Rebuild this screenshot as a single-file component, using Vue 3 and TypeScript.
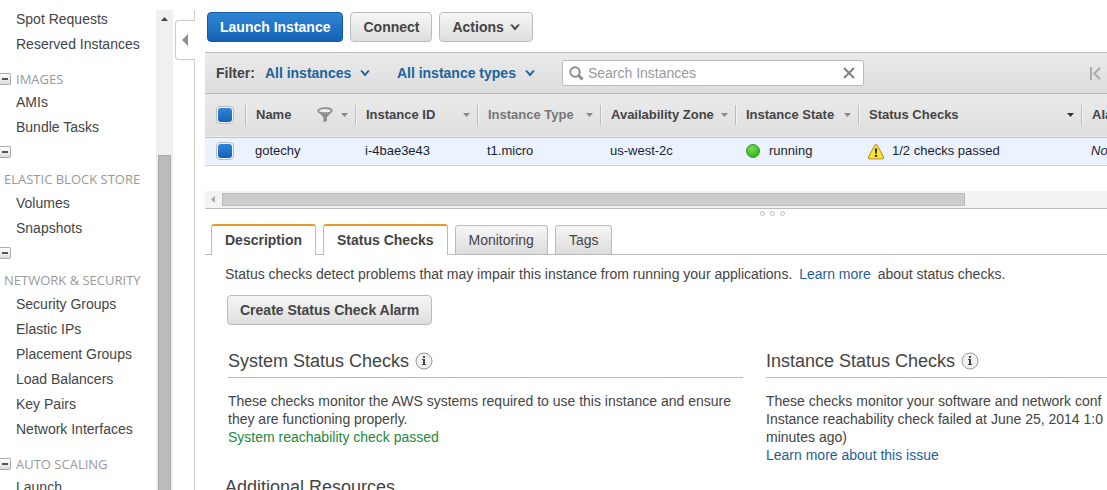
<script setup lang="ts">
import { ref } from 'vue'

interface NavGroup {
  title?: string
  wrapped?: boolean
  items: string[]
}

interface Column {
  key: string
  label: string
  filter?: boolean
  soft?: boolean
  sorted?: boolean
}

const groups: NavGroup[] = [
  { items: ['Spot Requests', 'Reserved Instances'] },
  { title: 'IMAGES', items: ['AMIs', 'Bundle Tasks'] },
  { title: 'ELASTIC BLOCK STORE', wrapped: true, items: ['Volumes', 'Snapshots'] },
  {
    title: 'NETWORK & SECURITY',
    wrapped: true,
    items: ['Security Groups', 'Elastic IPs', 'Placement Groups', 'Load Balancers', 'Key Pairs', 'Network Interfaces'],
  },
  { title: 'AUTO SCALING', items: ['Launch'] },
]

const columns: Column[] = [
  { key: 'name', label: 'Name', filter: true },
  { key: 'id', label: 'Instance ID' },
  { key: 'type', label: 'Instance Type', soft: true },
  { key: 'zone', label: 'Availability Zone' },
  { key: 'state', label: 'Instance State' },
  { key: 'checks', label: 'Status Checks', sorted: true },
  { key: 'alarm', label: 'Alarm Status' },
]

const tabs = ['Description', 'Status Checks', 'Monitoring', 'Tags']
const raised = ['Description', 'Status Checks']
const activeTab = ref('Status Checks')
const search = ref('')
const allSelected = ref(true)
const rowSelected = ref(true)
</script>

<template>
  <div class="console">
    <aside class="sidebar">
      <nav class="nav">
        <section v-for="(group, i) in groups" :key="i" class="group">
          <div v-if="group.title" class="group-head" :class="{ wrapped: group.wrapped }">
            <button class="toggle" type="button" :aria-label="'Collapse ' + group.title"></button>
            <h2>{{ group.title }}</h2>
          </div>
          <a v-for="item in group.items" :key="item" href="#">{{ item }}</a>
        </section>
      </nav>
      <div class="vscroll">
        <svg width="7" height="4" viewBox="0 0 7 4"><path d="M3.5 0 7 4H0z" fill="#444" /></svg>
        <div class="vthumb"></div>
      </div>
      <div class="edge">
        <button class="collapse" type="button" aria-label="Hide navigation">
          <svg width="6" height="12" viewBox="0 0 6 12"><path d="M6 0v12L0 6z" fill="#8e8e8e" /></svg>
        </button>
      </div>
    </aside>

    <main class="main">
      <div class="toolbar">
        <button class="btn primary" type="button">Launch Instance</button>
        <button class="btn" type="button">Connect</button>
        <button class="btn" type="button">
          Actions
          <svg width="10" height="7" viewBox="0 0 10 7"><path d="M0 .5h2.400L5 3.600 7.600.5H10L5 6.500z" fill="#444" /></svg>
        </button>
      </div>

      <div class="filters">
        <span class="filter-label">Filter:</span>
        <label class="pick">
          <select aria-label="Instance filter"><option>All instances</option></select>
          <svg width="10" height="7" viewBox="0 0 10 7"><path d="M0 .5h2.400L5 3.600 7.600.5H10L5 6.500z" fill="#1a63a0" /></svg>
        </label>
        <label class="pick">
          <select aria-label="Instance type filter"><option>All instance types</option></select>
          <svg width="10" height="7" viewBox="0 0 10 7"><path d="M0 .5h2.400L5 3.600 7.600.5H10L5 6.500z" fill="#1a63a0" /></svg>
        </label>
        <div class="search">
          <svg width="15" height="15" viewBox="0 0 15 15" fill="none" stroke="#8e8e8e">
            <circle cx="6" cy="6" r="4.700" stroke-width="2" />
            <path d="M9.500 9.500 13.600 13.400" stroke-width="3" />
          </svg>
          <input v-model="search" type="text" placeholder="Search Instances" aria-label="Search Instances" />
          <button type="button" aria-label="Clear search" @click="search = ''">
            <svg width="12" height="12" viewBox="0 0 12 12"><path d="M1 1l10 10M11 1 1 11" stroke="#808080" stroke-width="2" /></svg>
          </button>
        </div>
        <button class="first" type="button" aria-label="First page">
          <svg width="11" height="13" viewBox="0 0 11 13" fill="none" stroke="#aaa" stroke-width="2">
            <path d="M1 0v13M10 .8 4.300 6.500l5.700 5.700" />
          </svg>
        </button>
      </div>

      <div class="grid-wrap">
        <table>
          <colgroup>
            <col class="c-check" />
            <col v-for="c in columns" :key="c.key" :class="'c-' + c.key" />
          </colgroup>
          <thead>
            <tr>
              <th class="check"><input v-model="allSelected" type="checkbox" aria-label="Select all instances" /></th>
              <th v-for="c in columns" :key="c.key">
                <div class="head" :class="{ soft: c.soft }">
                  <span>{{ c.label }}</span>
                  <svg v-if="c.filter" class="funnel" width="16" height="16" viewBox="0 0 16 16">
                    <path d="M.8 4.200C3 7.600 13 7.600 15.200 4.200L10 10.200V13.800L6.400 15.600V10.200z" fill="#8e8e8e" />
                    <ellipse cx="8" cy="3.700" rx="6.800" ry="2.500" fill="#eee" stroke="#8e8e8e" stroke-width="1.700" />
                  </svg>
                  <svg class="caret" width="7" height="4" viewBox="0 0 7 4"><path d="M0 0h7L3.500 4z" :fill="c.sorted ? '#333' : '#888'" /></svg>
                </div>
              </th>
            </tr>
          </thead>
          <tbody>
            <tr>
              <td class="check"><input v-model="rowSelected" type="checkbox" aria-label="Select gotechy" /></td>
              <td>gotechy</td>
              <td>i-4bae3e43</td>
              <td>t1.micro</td>
              <td>us-west-2c</td>
              <td><div class="state"><span class="dot"></span>running</div></td>
              <td>
                <div class="warn">
                  <svg width="18" height="17" viewBox="0 0 18 17">
                    <path d="M9 1.500Q9.900 1.500 10.400 2.500L16.500 14Q17 15.900 15.300 15.900H2.700Q1 15.900 1.500 14L7.600 2.500Q8.100 1.500 9 1.500z" fill="#f8e62c" stroke="#c4a03a" stroke-width="1.200" />
                    <path d="M7.900 5.500h2.200l-.4 5.200H8.300z" fill="#222" />
                    <circle cx="9" cy="12.900" r="1.200" fill="#222" />
                  </svg>
                  1/2 checks passed
                </div>
              </td>
              <td><em>None</em></td>
            </tr>
          </tbody>
        </table>
      </div>

      <div class="hscroll">
        <svg width="4" height="7" viewBox="0 0 4 7"><path d="M4 0v7L0 3.500z" fill="#aaa" /></svg>
        <div class="htrack"><div class="hthumb"></div></div>
      </div>

      <div class="grip"><i></i><i></i><i></i></div>

      <div class="tabs" role="tablist">
        <button
          v-for="t in tabs"
          :key="t"
          type="button"
          role="tab"
          :aria-selected="t === activeTab"
          :class="{ on: raised.includes(t) }"
          @click="activeTab = t"
        >{{ t }}</button>
      </div>

      <section class="detail">
        <p class="intro">
          Status checks detect problems that may impair this instance from running your applications.
          <a href="#">Learn more</a> about status checks.
        </p>
        <button class="btn alarm" type="button">Create Status Check Alarm</button>

        <div class="columns">
          <article>
            <h3>
              System Status Checks
              <svg width="18" height="18" viewBox="0 0 18 18">
                <circle cx="9" cy="9" r="8" fill="#f0f0f0" stroke="#999" />
                <path d="M7 7h3v5h1v1H7v-1h1V8H7zM8 4h2v2H8z" fill="#444" />
              </svg>
            </h3>
            <p>These checks monitor the AWS systems required to use this instance and ensure<br />they are functioning properly.</p>
            <p class="ok">System reachability check passed</p>
          </article>
          <article>
            <h3>
              Instance Status Checks
              <svg width="18" height="18" viewBox="0 0 18 18">
                <circle cx="9" cy="9" r="8" fill="#f0f0f0" stroke="#999" />
                <path d="M7 7h3v5h1v1H7v-1h1V8H7zM8 4h2v2H8z" fill="#444" />
              </svg>
            </h3>
            <p>These checks monitor your software and network conf<br />Instance reachability check failed at June 25, 2014 1:0<br />minutes ago)</p>
            <p><a href="#">Learn more about this issue</a></p>
          </article>
        </div>

        <h3 class="more">Additional Resources</h3>
      </section>
    </main>
  </div>
</template>

<style>
html,
body {
  overflow: hidden;
  background: #fff;
}
</style>

<style scoped>
* {
  box-sizing: border-box;
}
.console {
  display: flex;
  height: 100vh;
  overflow: hidden;
  font: 14px/18px 'Liberation Sans', Arial, sans-serif;
  color: #444;
}
button,
input,
select {
  font: inherit;
  color: inherit;
}
svg {
  flex: none;
  display: block;
}
a {
  color: #1f5f99;
  text-decoration: none;
}
p,
h2,
h3 {
  margin: 0;
}

.sidebar {
  display: flex;
  flex: 0 0 195px;
}
.nav {
  width: 156px;
  padding-top: 7px;
  overflow: hidden;
}
.group a {
  display: block;
  padding-left: 16px;
  line-height: 25px;
  white-space: nowrap;
  color: #444;
}
.group-head {
  display: flex;
  align-items: center;
  gap: 5px;
  margin-top: 11px;
  height: 22px;
}
.group-head.wrapped {
  flex-direction: column;
  align-items: flex-start;
  gap: 10px;
  height: 51px;
  margin-top: 0;
  padding-top: 6px;
}
.group-head h2 {
  font: 13px/22px 'Open Sans', 'Noto Sans', sans-serif;
  color: #999;
  white-space: nowrap;
}
.wrapped h2 {
  padding-left: 4px;
}
.toggle {
  display: grid;
  place-items: center;
  flex: none;
  width: 11px;
  height: 12px;
  padding: 0;
  border: 1px solid #aaa;
  border-left: 0;
  border-radius: 0 2px 2px 0;
  background: linear-gradient(#fff, #ddd);
}
.toggle::before {
  content: '';
  width: 6px;
  height: 2px;
  background: #555;
}
.vscroll {
  display: flex;
  flex-direction: column;
  align-items: center;
  width: 17px;
  margin-top: 10px;
  padding-top: 7px;
  background: #f0f0f0;
}
.vthumb {
  flex: 1;
  width: 13px;
  margin-top: 134px;
  border: 1px solid #a8a8a8;
  border-bottom: 0;
  background: #bbb;
}
.edge {
  display: flex;
  flex-direction: column;
  flex: 1;
  margin-top: 10px;
  padding-left: 2px;
}
.edge::before,
.edge::after {
  content: '';
  height: 10px;
  border-right: 1px solid #ccc;
}
.edge::after {
  flex: 1;
}
.collapse {
  display: flex;
  align-items: center;
  justify-content: flex-start;
  height: 40px;
  padding: 0 0 0 6px;
  border: 1px solid #ccc;
  border-right: 0;
  border-radius: 4px 0 0 4px;
  background: #fff;
}

.main {
  flex: 1;
  min-width: 0;
  padding: 12px 0 0 10px;
}
.toolbar {
  display: flex;
  gap: 7px;
  padding: 0 2px 10px;
}
.btn {
  display: flex;
  align-items: center;
  gap: 6px;
  height: 30px;
  padding: 0 12px;
  border: 1px solid #bbb;
  border-radius: 4px;
  background: linear-gradient(#f6f6f6, #dedede);
  font-weight: bold;
  white-space: nowrap;
}
.primary {
  border-color: #1559a3;
  background: linear-gradient(#2f84d6, #1563b5);
  color: #fff;
}

.filters {
  display: flex;
  align-items: center;
  height: 42px;
  padding: 0 6px 0 11px;
  border-top: 1px solid #bbb;
  border-bottom: 1px solid #bbb;
  background: linear-gradient(#ebebeb, #dcdcdc);
}
.filter-label {
  margin-right: 10px;
  font-weight: bold;
}
.pick {
  display: flex;
  align-items: center;
  gap: 8px;
  margin-right: 27px;
}
.pick select {
  appearance: none;
  padding: 0;
  border: 0;
  background: none;
  font-weight: bold;
  color: #1a63a0;
}
.search {
  display: flex;
  align-items: center;
  gap: 4px;
  flex: 0 0 302px;
  height: 26px;
  padding: 0 8px 0 6px;
  border: 1px solid #bbb;
  border-radius: 2px;
  background: #fff;
}
.search input {
  flex: 1;
  min-width: 0;
  padding: 0;
  border: 0;
  outline: 0;
  background: none;
}
.search input::placeholder {
  color: #999;
}
.search button,
.first {
  padding: 0;
  border: 0;
  background: none;
}
.first {
  margin-left: auto;
}

.grid-wrap {
  height: 97px;
  overflow: hidden;
}
table {
  width: 100%;
  min-width: 996px;
  table-layout: fixed;
  border-collapse: collapse;
  font-size: 13px;
}
.c-check { width: 40px; }
.c-name { width: 110px; }
.c-id { width: 122px; }
.c-type { width: 123px; }
.c-zone { width: 135px; }
.c-state { width: 123px; }
.c-checks { width: 223px; }
th,
td {
  padding: 0;
  text-align: left;
  white-space: nowrap;
}
thead tr {
  height: 43px;
  border-bottom: 1px solid #c4c4c4;
  background: linear-gradient(#ebebeb, #dedede);
}
.head {
  display: flex;
  align-items: center;
  height: 20px;
  padding: 0 7px 0 10px;
  border-left: 1px solid #bbb;
  box-shadow: inset 1px 0 #f4f4f4;
}
.head.soft {
  color: #777;
}
.caret {
  margin-left: auto;
}
.funnel {
  margin-left: auto;
}
.funnel + .caret {
  margin-left: 8px;
}
tbody tr {
  height: 28px;
  border-bottom: 1px solid #c8d4e0;
  background: #eaf3ff;
  color: #1c1c30;
}
td {
  padding-left: 10px;
}
.check {
  padding-left: 11px;
}
.check input {
  appearance: none;
  display: grid;
  place-items: center;
  width: 18px;
  height: 18px;
  margin: 0;
  border: 1px solid #bbb;
  border-radius: 4px;
  background: #f4f4f4;
}
.check input:checked::before {
  content: '';
  width: 14px;
  height: 14px;
  border-radius: 3px;
  background: linear-gradient(#2f86d8, #1562b4);
}
.state,
.warn {
  display: flex;
  align-items: center;
}
.state {
  gap: 9px;
  padding-left: 1px;
}
.warn {
  gap: 7px;
  margin-left: -1px;
}
.dot {
  width: 14px;
  height: 14px;
  border: 1px solid #3a9a2a;
  border-radius: 50%;
  background: radial-gradient(circle at 40% 30%, #7edc5a, #35b81f 70%);
}

.hscroll {
  display: flex;
  align-items: center;
  gap: 7px;
  height: 18px;
  padding-left: 6px;
  border-bottom: 1px solid #bbb;
  background: #f3f3f3;
}
.htrack {
  flex: 1;
}
.hthumb {
  width: 84%;
  height: 13px;
  border: 1px solid #bcbcbc;
  background: #cdcdcd;
}
.grip {
  display: flex;
  justify-content: center;
  gap: 5px;
  height: 15px;
  padding: 2px 0 0 232px;
}
.grip i {
  width: 5px;
  height: 5px;
  border: 1px solid #bbb;
  border-radius: 50%;
}

.tabs {
  display: flex;
  align-items: flex-end;
  gap: 7px;
  padding: 0 6px;
  box-shadow: inset 0 -1px #bbb;
}
.tabs button {
  height: 30px;
  padding: 0 13px;
  border: 1px solid #bbb;
  border-radius: 3px 3px 0 0;
  background: linear-gradient(#f6f6f6, #dcdcdc);
}
.tabs .on {
  height: 31px;
  padding-bottom: 2px;
  border-top: 2px solid #e59b2c;
  border-bottom: 0;
  background: #fff;
  font-weight: bold;
}

.detail {
  padding: 10px 0 0 20px;
}
.intro {
  white-space: nowrap;
}
.intro a {
  margin: 0 3px;
}
.alarm {
  margin: 12px 0 0 2px;
}
.columns {
  display: grid;
  grid-template-columns: repeat(2, minmax(515px, 1fr));
  gap: 23px;
  padding: 23px 0 0 3px;
  white-space: nowrap;
}
h3 {
  display: flex;
  align-items: center;
  gap: 6px;
  font-size: 18px;
  font-weight: normal;
  line-height: 26px;
}
article h3 {
  height: 30px;
  margin-bottom: 14px;
  padding-bottom: 3px;
  border-bottom: 1px solid #bbb;
}
.ok {
  color: #1d8a3c;
}
.more {
  margin-top: 10px;
}
</style>
